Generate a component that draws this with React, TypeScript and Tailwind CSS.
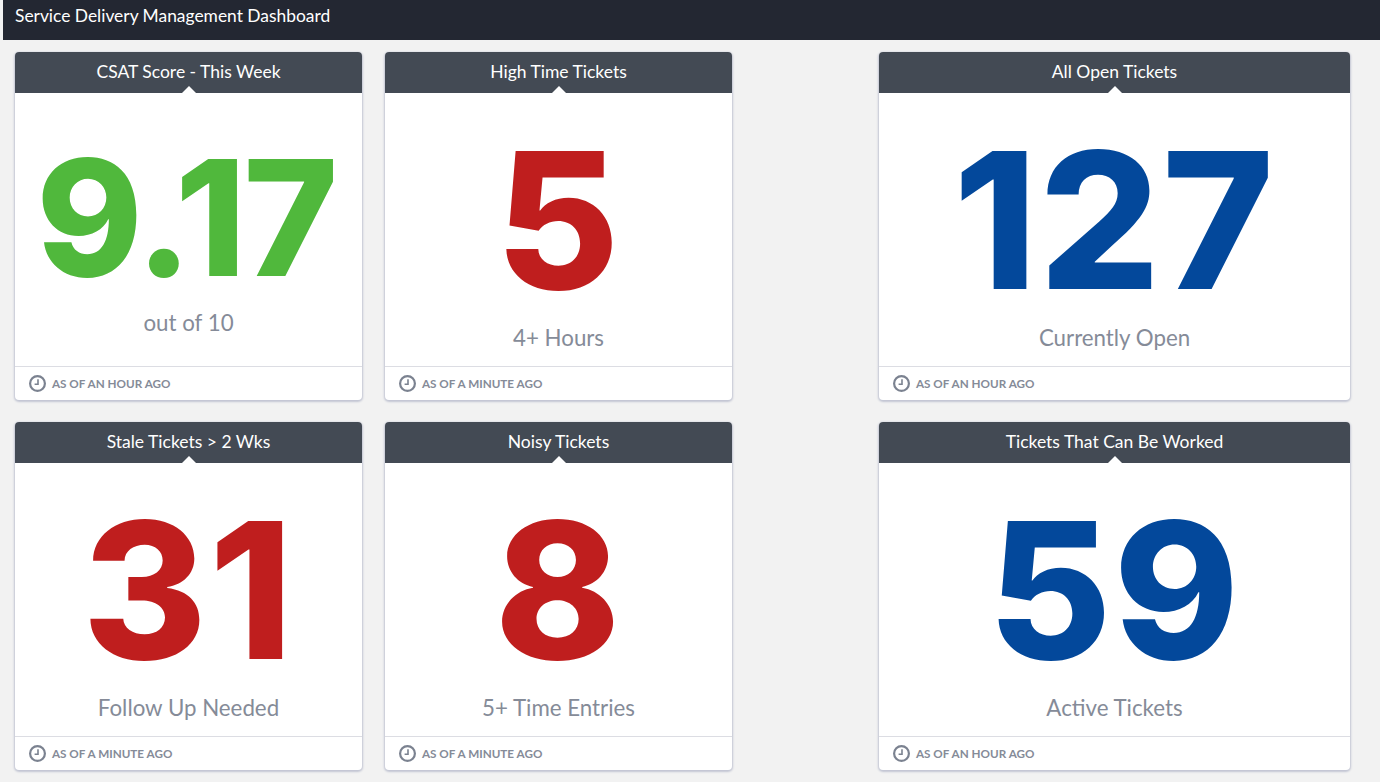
import React from 'react';

type CardProps = {
  title: string;
  value: string;
  label: string;
  footer: string;
  color: string;
  small?: boolean;
  wide?: boolean;
};

function ClockIcon() {
  return (
    <svg width="17" height="17" viewBox="0 0 17 17" fill="none" className="shrink-0">
      <circle cx="8.5" cy="8.5" r="7.4" stroke="#7b8290" strokeWidth="2.2" />
      <path d="M9 4.2V9.2H5.6" stroke="#7b8290" strokeWidth="1.6" />
    </svg>
  );
}

function Card({ title, value, label, footer, color, small, wide }: CardProps) {
  return (
    <div className={`flex flex-col h-[348px] bg-white rounded-[4px] shadow-[0_1px_2px_1px_#c2c5d3] ${wide ? 'w-[471px]' : 'w-[347px]'}`}>
      <div className="relative h-[41px] shrink-0 flex items-center justify-center pb-[1px] rounded-t-[4px] bg-[#434a54] text-white text-[17.5px] font-['Lato',sans-serif]">
        {title}
        <div className="absolute bottom-0 left-1/2 -ml-[7px] w-0 h-0 border-x-[7px] border-x-transparent border-b-[7px] border-b-white"></div>
      </div>
      <div className="flex-1 flex flex-col items-center min-h-0">
        {small ? (
          <div className={`mt-[40px] h-[170px] leading-[170px] text-[161px] font-extrabold tracking-[-2.5px] pr-[5px] font-['Inter',sans-serif] ${color}`}>{value}</div>
        ) : (
          <div className={`mt-[33px] h-[188px] leading-[188px] text-[190px] font-extrabold tracking-[2px] font-['Inter',sans-serif] ${color}`}>{value}</div>
        )}
        <div className={`text-[#858b98] text-[22.3px] leading-[28px] font-['Lato',sans-serif] ${small ? 'mt-[6px]' : 'mt-[10px]'}`}>{label}</div>
      </div>
      <div className="h-[34px] shrink-0 flex items-center gap-[6px] pl-[14px] border-t border-[#dcdde3] text-[#858b98] text-[11.7px] font-bold font-['Lato',sans-serif]">
        <ClockIcon />
        {footer}
      </div>
    </div>
  );
}

export default function App() {
  return (
    <div className="w-[1380px] h-[782px] overflow-hidden bg-[#f2f2f2] pl-[3px]">
      <div className="h-[40px] bg-[#232732] flex items-start pt-[3px] pl-[12px] text-white text-[17.4px] font-['Lato',sans-serif]">
        Service Delivery Management Dashboard
      </div>
      <div className="pl-[12px] pt-[12px] flex flex-col gap-[22px]">
        <div className="flex">
          <Card title="CSAT Score - This Week" value="9.17" label="out of 10" footer="AS OF AN HOUR AGO" color="text-[#50b83c]" small />
          <div className="w-[23px]"></div>
          <Card title="High Time Tickets" value="5" label="4+ Hours" footer="AS OF A MINUTE AGO" color="text-[#bf1e1e]" />
          <div className="w-[147px]"></div>
          <Card title="All Open Tickets" value="127" label="Currently Open" footer="AS OF AN HOUR AGO" color="text-[#03489b]" wide />
        </div>
        <div className="flex">
          <Card title="Stale Tickets > 2 Wks" value="31" label="Follow Up Needed" footer="AS OF A MINUTE AGO" color="text-[#bf1e1e]" />
          <div className="w-[23px]"></div>
          <Card title="Noisy Tickets" value="8" label="5+ Time Entries" footer="AS OF A MINUTE AGO" color="text-[#bf1e1e]" />
          <div className="w-[147px]"></div>
          <Card title="Tickets That Can Be Worked" value="59" label="Active Tickets" footer="AS OF AN HOUR AGO" color="text-[#03489b]" wide />
        </div>
      </div>
    </div>
  );
}
